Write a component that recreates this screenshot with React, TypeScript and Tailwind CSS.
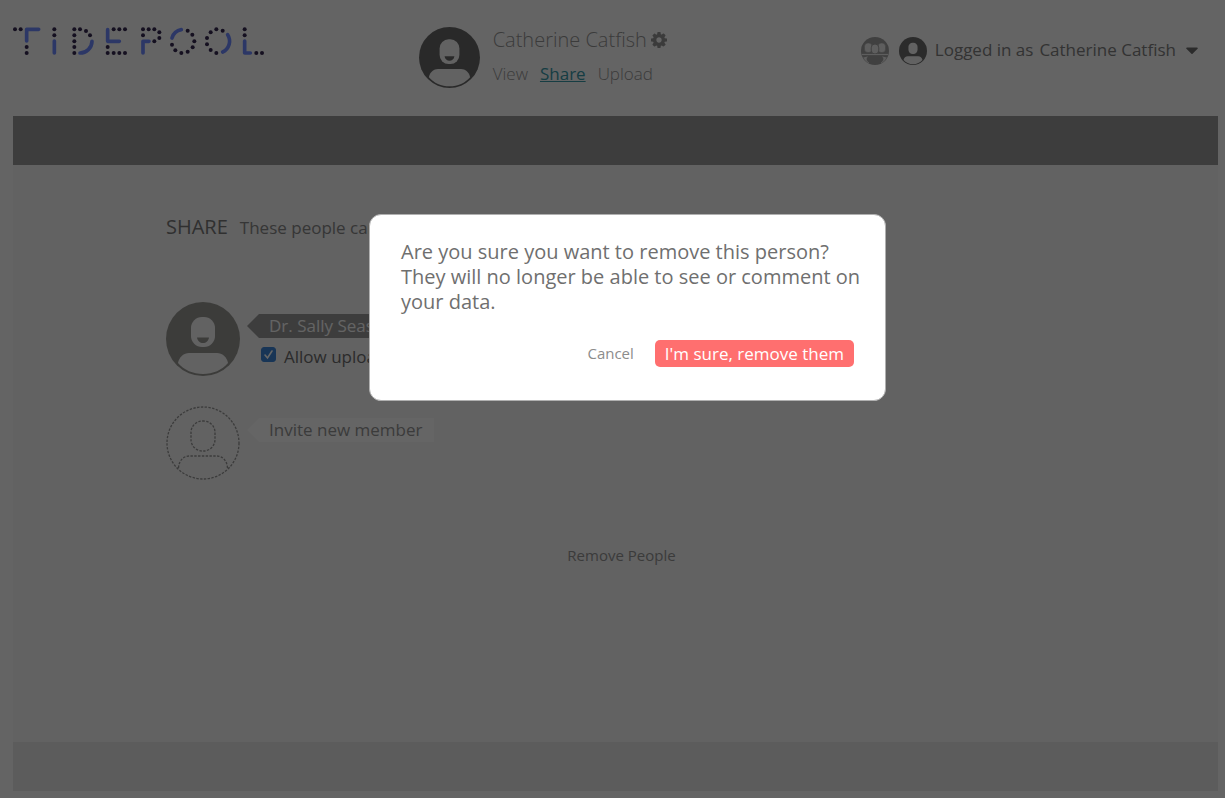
import React, { useState } from "react";
import { FaCaretDown } from "react-icons/fa";

const LOGO_DOTS = [
  // T
  [44, 58], [61, 58], [79, 111], [79, 129],
  // i
  [162, 58], [162, 76],
  // D
  [222, 58], [222, 76], [222, 94], [222, 111], [222, 129], [239, 58], [257, 63], [269, 76],
  // E
  [340, 58], [357, 58], [374, 58], [322, 111], [322, 129], [340, 129], [357, 129], [374, 129],
  // P
  [428, 58], [445, 58], [462, 58], [477, 67], [477, 84], [462, 94], [428, 76],
  // O
  [562, 62], [576, 74], [582, 94], [577, 112], [562, 125], [543, 129], [525, 121], [515, 104],
  // O
  [667, 62], [648, 58], [631, 67], [620, 84], [620, 103], [631, 120], [648, 129],
  // L
  [733, 58], [733, 76], [768, 129], [785, 129],
];

const LOGO_STROKES = [
  "M79 93V58H115",
  "M162 93V129",
  "M275 94A36 36 0 0 1 239 129",
  "M322 59V94H357",
  "M428 129V94H446",
  "M515 84A36 36 0 0 1 543 59",
  "M682 74A36 36 0 0 1 667 126",
  "M733 93V129H750",
];

function Logo() {
  return (
    <svg viewBox="38 48 759 90" className="h-[30px] w-[253px]" role="img" aria-label="Tidepool">
      {LOGO_DOTS.map(([x, y]) => (
        <circle key={`${x}-${y}`} cx={x} cy={y} r="6" fill="#352850" />
      ))}
      {LOGO_STROKES.map((d) => (
        <path key={d} d={d} fill="none" stroke="#6e8aff" strokeWidth="11" strokeLinecap="round" strokeLinejoin="round" />
      ))}
    </svg>
  );
}

function GearIcon({ className }: { className: string }) {
  return (
    <svg viewBox="0 128 1536 1536" className={className} fill="currentColor" aria-hidden="true">
      <path d="M1024 896q0-106-75-181t-181-75-181 75-75 181 75 181 181 75 181-75 75-181zm512-109v222q0 12-8 23t-20 13l-185 28q-19 54-39 91 35 50 107 138 10 12 10 25t-9 23q-27 37-99 108t-94 71q-12 0-26-9l-138-108q-44 23-91 38-16 136-29 186-7 28-36 28h-222q-14 0-24.500-8.500t-11.500-21.500l-28-184q-49-16-90-37l-141 107q-10 9-25 9-14 0-25-11-126-114-165-168-7-10-7-23 0-12 8-23 15-21 51-66.500t54-70.500q-27-50-41-99l-183-27q-13-2-21-12.500t-8-23.500v-222q0-12 8-23t19-13l186-28q14-46 39-92-40-57-107-138-10-12-10-24 0-10 9-23 26-36 98.500-107.500t94.500-71.500q13 0 26 10l138 107q44-23 91-38 16-136 29-186 7-28 36-28h222q14 0 24.500 8.500t11.500 21.500l28 184q49 16 90 37l142-107q9-9 24-9 13 0 25 10 129 119 165 170 7 8 7 22 0 12-8 23-15 21-51 66.500t-54 70.500q26 50 41 98l183 28q13 2 21 12.500t8 23.500z" />
    </svg>
  );
}

function Avatar({ className, smile = true }: { className: string; smile?: boolean }) {
  return (
    <svg viewBox="0 0 74 74" className={className} aria-hidden="true">
      <circle cx="37" cy="37" r="37" fill="currentColor" />
      <rect x="25" y="15" width="24" height="30" rx="11" fill="#f6f6f6" />
      {smile && <path d="M31 35.500H43C42.500 39 40 41 37 41S31.500 39 31 35.500Z" fill="currentColor" />}
      <path d="M12 61C13 55 18 51 23 51H51C56 51 61 55 62 61C56 68 47 72 37 72S18 68 12 61Z" fill="#f6f6f6" />
    </svg>
  );
}

function EmptyAvatar() {
  return (
    <svg
      viewBox="0 0 74 74"
      className="size-[74px] text-[#949494]"
      fill="none"
      stroke="currentColor"
      strokeWidth="1.3"
      strokeDasharray="2.4 1.4"
      aria-hidden="true"
    >
      <circle cx="37" cy="37" r="36" />
      <rect x="25" y="15" width="24" height="30" rx="11.500" />
      <path d="M12.500 62C13 54 18 50 23 50H51C56 50 61 54 61.500 62" />
    </svg>
  );
}

function CareTeamIcon() {
  return (
    <svg viewBox="0 0 28 28" className="size-7 text-[#a0a0a0]" aria-hidden="true">
      <circle cx="14" cy="14" r="14" fill="currentColor" />
      <g fill="#ececec" stroke="currentColor">
        <rect x="3.500" y="6" width="7.500" height="9.500" rx="3.500" strokeWidth="0.5" />
        <rect x="17" y="6" width="7.500" height="9.500" rx="3.500" strokeWidth="0.5" />
        <rect x="10.200" y="7" width="7.600" height="10" rx="3.800" strokeWidth="1" />
      </g>
      <path d="M0.800 17.500H27.200" stroke="#ececec" strokeWidth="1.2" />
      <path
        d="M2.500 20.500C4 23.500 6 25 8 26C5.500 24 4.500 22 6.500 19.500M25.500 20.500C24 23.500 22 25 20 26C22.500 24 23.500 22 21.500 19.500"
        fill="#ececec"
        stroke="#ececec"
        strokeWidth="0.5"
      />
    </svg>
  );
}

function Header() {
  return (
    <header className="grid h-[116px] grid-cols-3">
      <a href="#home" className="mt-[26px] self-start justify-self-start">
        <Logo />
      </a>

      <div className="mt-[27px] flex items-start gap-[13px] pl-1">
        <Avatar className="size-[61px] shrink-0 text-[#686868]" />
        <div className="whitespace-nowrap font-light text-[#949494]">
          <div className="flex items-center gap-1 text-[20px] leading-[26px]">
            Catherine Catfish
            <button type="button" aria-label="Settings" className="text-[#949494]">
              <GearIcon className="size-4" />
            </button>
          </div>
          <nav className="mt-2 flex gap-3 text-[17px] leading-[26px]">
            <a href="#view">View</a>
            <a href="#share" className="font-normal text-[#3898a8] underline">
              Share
            </a>
            <a href="#upload">Upload</a>
          </nav>
        </div>
      </div>

      <div className="mt-[37px] flex items-start gap-2 self-start justify-self-end whitespace-nowrap pr-4 text-[17px] leading-[26px] text-[#808080]">
        <a href="#careteam" aria-label="Care team" className="mr-0.5">
          <CareTeamIcon />
        </a>
        <Avatar className="size-7 text-[#6c6c6c]" smile={false} />
        <button type="button" className="flex items-center gap-1.5">
          <span>Logged in as</span>
          <span>Catherine Catfish</span>
          <FaCaretDown className="size-5 text-[#6c6c6c]" />
        </button>
      </div>
    </header>
  );
}

function Arrow({ className }: { className: string }) {
  return (
    <svg viewBox="0 0 12 24" className={className} aria-hidden="true">
      <path d="M12 0V24L0 12Z" fill="currentColor" />
    </svg>
  );
}

function ShareSettings() {
  const [allowUpload, setAllowUpload] = useState(true);

  return (
    <main className="h-[577px] bg-[#f4f4f4] pl-[153px] pr-[141px] pt-12">
      <div className="flex items-baseline gap-3 leading-7 text-[#888888]">
        <h1 className="text-[20px] text-[#787878]">SHARE</h1>
        <p className="text-[17px]">These people can view your data</p>
      </div>

      <ul className="mt-[60px] space-y-[30px]">
        <li className="flex items-start gap-[7px]">
          <Avatar className="size-[74px] text-[#969692]" />
          <div className="pt-3">
            <div className="flex">
              <Arrow className="h-6 w-3 text-[#989898]" />
              <span className="bg-[#989898] pl-2.5 pr-3 text-[17px] leading-6 text-[#fafafa]">Dr. Sally Seastar</span>
            </div>
            <label className="ml-3.5 mt-[7px] flex items-start gap-2 text-[17px] leading-6 text-[#6c6c6c]">
              <span className="relative mt-0.5 flex size-[15px]">
                <input
                  type="checkbox"
                  checked={allowUpload}
                  onChange={(e) => setAllowUpload(e.target.checked)}
                  className="peer size-[15px] appearance-none rounded-[3px] border border-[#3c86d8] checked:bg-[#3c86d8]"
                />
                <svg
                  viewBox="0 0 15 15"
                  className="pointer-events-none absolute inset-0 hidden peer-checked:block"
                  fill="none"
                  stroke="#ffffff"
                  strokeWidth="1.6"
                  strokeLinecap="round"
                >
                  <path d="M4 8L6.500 11L11 4" />
                </svg>
              </span>
              Allow uploading
            </label>
          </div>
        </li>

        <li className="flex items-start gap-[7px]">
          <EmptyAvatar />
          <button type="button" className="mt-3 flex text-left">
            <Arrow className="h-6 w-3 text-[#fcfcfc]" />
            <span className="bg-[#fcfcfc] pl-2.5 pr-3 text-[17px] leading-6 text-[#949494]">Invite new member</span>
          </button>
        </li>
      </ul>

      <div className="mt-[63px] text-center">
        <button type="button" className="text-[15px] leading-6 text-[#949494]">
          Remove People
        </button>
      </div>
    </main>
  );
}

function RemoveDialog() {
  return (
    <div className="fixed inset-0 flex items-start justify-center bg-black/60 pl-[30px] pt-[214px]">
      <div
        role="dialog"
        aria-modal="true"
        aria-labelledby="remove-title"
        className="w-[517px] rounded-xl border border-[#b0b0b0] bg-white pb-[33px] pl-[31px] pr-5 pt-6"
      >
        <p id="remove-title" className="text-[20px] leading-[25px] text-[#6f6f6f]">
          Are you sure you want to remove this person? They will no longer be able to see or comment on your data.
        </p>
        <div className="mt-[26px] flex items-center justify-end gap-[21px] pr-[11px]">
          <button type="button" className="text-[15px] text-[#8c8c8c]">
            Cancel
          </button>
          <button type="button" className="rounded-[5px] bg-[#ff6f6f] px-2.5 text-[17px] font-medium leading-[27px] text-white">
            I'm sure, remove them
          </button>
        </div>
      </div>
    </div>
  );
}

export default function App() {
  return (
    <div className="min-h-screen bg-[#fafafa] pb-[7px] pl-[13px] pr-[7px] font-['Open_Sans',sans-serif]">
      <Header />
      <div className="h-[49px] bg-[#989898]" />
      <ShareSettings />
      <footer className="h-[49px] bg-[#e6e6e6]" />
      <RemoveDialog />
    </div>
  );
}
